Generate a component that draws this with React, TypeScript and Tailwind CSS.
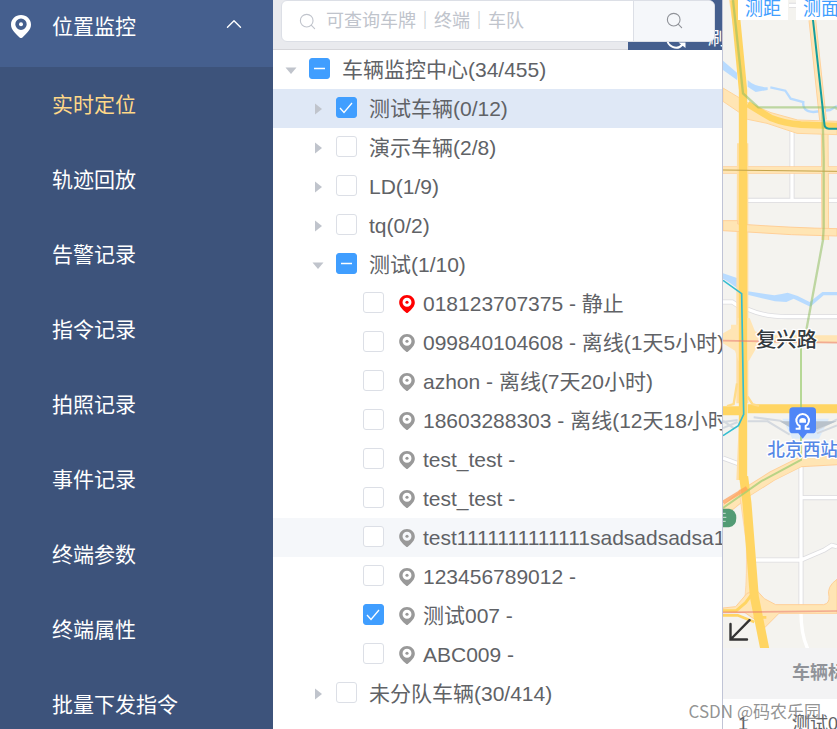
import React, { useEffect, useRef, useState } from 'react';
import { Search, ChevronUp } from 'lucide-react';

interface TreeNode {
  id: string;
  label: string;
  level: 0 | 1 | 2;
  expanded?: boolean;
  checked?: boolean;
  indeterminate?: boolean;
  pin?: string;
  rowClass?: string;
}

const menuItems = [
  '实时定位',
  '轨迹回放',
  '告警记录',
  '指令记录',
  '拍照记录',
  '事件记录',
  '终端参数',
  '终端属性',
  '批量下发指令',
];

const GRAY_PIN = 'text-[#999999]';
const RED_PIN = 'text-[#ff0000]';

const nodes: TreeNode[] = [
  { id: 'root', label: '车辆监控中心(34/455)', level: 0, expanded: true, indeterminate: true },
  { id: 'g1', label: '测试车辆(0/12)', level: 1, expanded: false, checked: true, rowClass: 'bg-[#dfe8f6]' },
  { id: 'g2', label: '演示车辆(2/8)', level: 1, expanded: false },
  { id: 'g3', label: 'LD(1/9)', level: 1, expanded: false },
  { id: 'g4', label: 'tq(0/2)', level: 1, expanded: false },
  { id: 'g5', label: '测试(1/10)', level: 1, expanded: true, indeterminate: true },
  { id: 'v1', label: '018123707375 - 静止', level: 2, pin: RED_PIN },
  { id: 'v2', label: '099840104608 - 离线(1天5小时)', level: 2, pin: GRAY_PIN },
  { id: 'v3', label: 'azhon - 离线(7天20小时)', level: 2, pin: GRAY_PIN },
  { id: 'v4', label: '18603288303 - 离线(12天18小时)', level: 2, pin: GRAY_PIN },
  { id: 'v5', label: 'test_test -', level: 2, pin: GRAY_PIN },
  { id: 'v6', label: 'test_test -', level: 2, pin: GRAY_PIN },
  { id: 'v7', label: 'test1111111111111sadsadsadsa1', level: 2, pin: GRAY_PIN, rowClass: 'bg-[#f5f7fa]' },
  { id: 'v8', label: '123456789012 -', level: 2, pin: GRAY_PIN },
  { id: 'v9', label: '测试007 -', level: 2, pin: GRAY_PIN, checked: true },
  { id: 'v10', label: 'ABC009 -', level: 2, pin: GRAY_PIN },
  { id: 'g6', label: '未分队车辆(30/414)', level: 1, expanded: false },
];

const indent = ['pl-3', 'pl-[39px]', 'pl-[66px]'];

const PinIcon: React.FC<{ className?: string }> = ({ className }) => (
  <svg viewBox="0 0 20 23" className={className} fill="currentColor" aria-hidden="true">
    <path
      fillRule="evenodd"
      d="M10 0C4.400 0 0 4.200 0 9.500c0 5.200 4.300 8.800 8.300 12.700a2.400 2.400 0 0 0 3.400 0C15.700 18.300 20 14.700 20 9.500 20 4.200 15.600 0 10 0Zm0 3.600a5.700 5.700 0 1 1 0 11.400 5.700 5.700 0 0 1 0-11.400Z"
    />
    <circle cx="10" cy="9.300" r="2" />
  </svg>
);

const Checkbox: React.FC<{ node: TreeNode }> = ({ node }) => {
  const ref = useRef<HTMLInputElement>(null);
  const [checked, setChecked] = useState(!!node.checked);
  const [partial, setPartial] = useState(!!node.indeterminate);

  useEffect(() => {
    if (ref.current) ref.current.indeterminate = partial;
  }, [partial]);

  return (
    <span className="relative mb-0.5 block size-[21px] shrink-0">
      <input
        ref={ref}
        id={node.id}
        type="checkbox"
        checked={checked}
        onChange={(e) => {
          setChecked(e.target.checked);
          setPartial(false);
        }}
        className="block size-[21px] appearance-none rounded-[3px] border border-[#dcdfe6] bg-white checked:border-[#409eff] checked:bg-[#409eff] indeterminate:border-[#409eff] indeterminate:bg-[#409eff]"
      />
      {(checked || partial) && (
        <svg viewBox="0 0 21 21" className="pointer-events-none absolute inset-0 size-full" fill="none" stroke="#fff" aria-hidden="true">
          {partial ? <path d="M5 10.500h11" strokeWidth="1.500" /> : <path d="M4 11l4 4.500 8-9.500" strokeWidth="1.300" />}
        </svg>
      )}
    </span>
  );
};

const TreeRow: React.FC<{ node: TreeNode }> = ({ node }) => (
  <li className={`flex h-[39px] items-center whitespace-nowrap ${indent[node.level]} ${node.rowClass ?? ''}`}>
    <span className="mr-3 flex w-3 shrink-0 justify-center">
      {node.expanded !== undefined && (
        <button type="button" aria-label={node.expanded ? '收起' : '展开'} className="block text-[#c0c4cc]">
          <svg viewBox="0 0 12 12" className="size-3" fill="currentColor" aria-hidden="true">
            {node.expanded ? <path d="M.5 3.500h11L6 10Z" /> : <path d="M3 .5v11L10 6Z" />}
          </svg>
        </button>
      )}
    </span>
    <Checkbox node={node} />
    <label htmlFor={node.id} className="flex items-center pt-px">
      {node.pin ? <PinIcon className={`mr-2 ml-[15px] h-[18px] w-4 shrink-0 ${node.pin}`} /> : <span className="w-3" />}
      <span>{node.label}</span>
    </label>
  </li>
);

const Sidebar: React.FC = () => (
  <nav className="w-[273px] shrink-0 overflow-hidden bg-[#3d537b] text-[21px] text-white">
    <button type="button" className="flex h-[67px] w-full items-center bg-[#455f8e] pr-[26px] pb-3.5 pl-[11px] text-left">
      <PinIcon className="h-[23px] w-5 shrink-0" />
      <span className="ml-[21px] flex-1">位置监控</span>
      <ChevronUp className="mb-1.5 size-[26px]" strokeWidth={1.3} />
    </button>
    <ul>
      {menuItems.map((item, i) => (
        <li key={item}>
          <a href="#" className={`flex h-[75px] items-center pl-[52px] ${i === 0 ? 'text-[#ffd888]' : ''}`}>
            {item}
          </a>
        </li>
      ))}
    </ul>
  </nav>
);

const VehiclePanel: React.FC = () => (
  <section className="relative flex w-[450px] shrink-0 flex-col overflow-hidden border-r border-[#c0c4d6] bg-white">
    <div className="relative h-[50px] shrink-0 border-b border-[#d6d6da] bg-[#e9eaee] pr-[7px] pl-2">
      {/* refresh button sits underneath the search box */}
      <button type="button" className="absolute top-0 right-0 h-[50px] w-[94px] overflow-hidden bg-[#455f8e] text-[18px] text-white">
        <svg viewBox="0 0 20 20" className="absolute top-[29px] left-[38px] size-5" fill="none" stroke="currentColor" strokeWidth="2" aria-hidden="true">
          <path d="M1.500 9a8.500 8.500 0 0 0 15 6.500M18.500 10a8.500 8.500 0 0 0-15-6" />
          <path d="M12.500 13.500h7v5.500Z" fill="currentColor" stroke="none" />
        </svg>
        <span className="absolute top-[26px] left-20 whitespace-nowrap">刷新</span>
      </button>
      <form className="relative flex h-[42px] overflow-hidden rounded-md border border-[#dcdfe6] bg-white" onSubmit={(e) => e.preventDefault()}>
        <label htmlFor="keyword" className="flex items-center pl-4 text-[#c0c4cc]">
          <Search className="size-[19px]" strokeWidth={1.4} aria-label="搜索" />
        </label>
        <input
          id="keyword"
          type="text"
          placeholder="可查询车牌｜终端｜车队"
          className="min-w-0 flex-1 bg-transparent pl-[9px] text-[18px] text-[#606266] outline-none placeholder:text-[#c0c4cc]"
        />
        <button type="submit" aria-label="查询" className="flex w-[81px] items-center justify-center border-l border-[#dcdfe6] bg-[#f5f7fa] pb-0.5 text-[#909399]">
          <Search className="size-[19px]" strokeWidth={1.4} />
        </button>
      </form>
    </div>
    <ul className="text-[21px] text-[#606266]">
      {nodes.map((node) => (
        <TreeRow key={node.id} node={node} />
      ))}
    </ul>
  </section>
);

const MapDrawing: React.FC = () => (
  <svg viewBox="18 0 342 1944" preserveAspectRatio="xMinYMin slice" className="absolute inset-0 size-full" fill="none" aria-label="地图">
    <rect x="18" width="2000" height="1944" fill="#f4f3ef" />
    {/* water */}
    <g fill="#b8dbff">
      <path d="M18 182l42 36v22l-42-30ZM92 240q20 20 60 22v8l-36 6-24-16Z" />
      <path d="M18 820l42 14v30q-20-16-42-28Z" />
      <path d="M92 874l80 12q24-4 40-8l30 10 36 18 38-30h44v10h-40l-40 34-50-24-22 10-34-2-82-20Z" />
    </g>
    <path d="M160 262l45 10 16 24 38 10q-4 28 30 30l50-6 21-12" stroke="#b8dbff" strokeWidth="7" />
    {/* minor roads */}
    <g stroke="#dcdcdf" strokeWidth="15">
      <path d="M225 385v215M92 601h268M216 16h24" />
      <path d="M18 906h28l18 12M92 928q50 22 120 22h148M18 1374l48 18M252 1390v430M252 1493h108M116 1680h136l70-30 22-14 16 4" />
    </g>
    <g stroke="#fff" strokeWidth="10">
      <path d="M225 385v215M92 601h268M216 16h24" />
      <path d="M18 906h28l18 12M92 928q50 22 120 22h148M18 1374l48 18M252 1390v430M252 1493h108M116 1680h136l70-30 22-14 16 4" />
      <path d="M252 1820q-2 80 20 126" />
    </g>
    {/* railway yard */}
    <path d="M196 1256h140l-30 60h-80Z" fill="#dcebfa" />
    <g stroke="#d4d9df" strokeWidth="6">
      <path d="M92 1264h60l66 40M110 1252l80 10 30 14M18 1266l44-6M18 1284l44-18M18 1262l34 24" />
      <path d="M296 1292l64-34M300 1300l60-24" />
    </g>
    <path d="M188 1264h172l-60 24h-72Z" fill="#b9c2cb" />
    {/* secondary roads */}
    <g stroke="#ffcf98" strokeWidth="23">
      <path d="M286 60l32 300M323 390l2 330M18 510h342" />
      <path d="M18 1534l72-58 76-48 84-42 110-6" strokeWidth="31" />
    </g>
    <g stroke="#ffe5b4" strokeWidth="18">
      <path d="M286 60l32 300M323 390l2 330M18 510h342" />
      <path d="M18 1534l72-58 76-48 84-42 110-6" strokeWidth="26" />
    </g>
    <path d="M36 0h24l22 220h-12ZM60 430h34v780H58v-310ZM66 1250h12v190H58Z" fill="#ffdfa5" />
    <path d="M66 1470h12l26 300-20 20q6-60 4-160Z" fill="#ffe5b4" stroke="#ffcf98" strokeWidth="2" />
    <path d="M18 662h44v10q170 12 298 14v22q-140-2-268-12l-74-4Z" fill="#ffe5b4" stroke="#ffcf98" strokeWidth="3" />
    <path d="M18 1000l24-14v-12h20v-20h36l16 40 30 12h216v24H150l-32 14-22 38H64l-10-30-36-22Z" fill="#ffe5b4" />
    <path d="M18 264l50 30 24 14 70 30 80 22 118 4v40l-120-4-90-30-58-12h-24v-20l-50-34Z" fill="#ffe5b4" stroke="#ffd49a" strokeWidth="3" />
    <path d="M18 1824l38-4 34-40 30-8 22 24 34 18h144q18-4 16-24-8-30 24-52v102H186l-46 46-30-30-26-18-66-2Z" fill="#ffe5b4" stroke="#ffcf98" strokeWidth="3" />
    {/* ring road */}
    <g stroke="#ffd563" strokeLinejoin="round">
      <path d="M52 0l26 270v1170" strokeWidth="25" />
      <path d="M80 1430l10 80 22 280 32 160" strokeWidth="27" />
      <path d="M92 312l70 42q40 16 90 20l108 4" strokeWidth="20" />
      <path d="M18 1232h60M92 1226h268" strokeWidth="27" />
      <path d="M18 1832h40l28-24 16-22" strokeWidth="9" />
      <path d="M18 1846h44l50 20M110 1852h38" strokeWidth="8" />
    </g>
    <path d="M60 1150l-10 62-20 6M92 1190l14 22 20 6" stroke="#ffdc8a" strokeWidth="7" />
    {/* metro lines */}
    <path d="M48 0l30 280 46 42h232l4 6M316 322l4 150v210l-2 38-50 270" stroke="#8fbd60" strokeOpacity=".55" strokeWidth="7" />
    <path d="M252 1040v340l-120 64-114 80" stroke="#9bcc70" strokeOpacity=".7" strokeWidth="6" />
    <path d="M288 60l34 310q0 16 14 16h24" stroke="#159e9e" strokeWidth="6" />
    <path d="M18 510l342 4" stroke="#c3a34a" strokeWidth="3" />
    <path d="M18 841l56 40 6 362-16 34-46 30" stroke="#35bdd0" strokeWidth="5" />
    <path d="M18 1022l342 6M18 1837l342-4" stroke="#e5716e" strokeOpacity=".5" strokeWidth="5" />
    <path d="M18 1508l72-44" stroke="#ff9c55" strokeOpacity=".7" strokeWidth="12" />
    <path d="M18 1526h18q22 4 22 28t-22 28H18Z" fill="#529b74" />
    <path d="M18 1540h8M18 1552h10M18 1564h8" stroke="#cfe5d8" strokeWidth="3" />
    {/* station */}
    <path d="M228 1222h58q11 0 11 11v56q0 11-11 11h-16l-13 16-13-16h-16q-11 0-11-11v-56q0-11 11-11Z" fill="#4f86f7" />
    <path d="M236 1286h12v-8a19 19 0 1 1 18 0v8h12" stroke="#fff" strokeWidth="6" />
    <path d="M247 1268v-6q0-8 10-8t10 8v6Z" fill="#fff" />
    <g fontFamily="'Noto Sans CJK SC', sans-serif" stroke="#fff" strokeWidth="8" paintOrder="stroke" strokeLinejoin="round">
      <text x="117" y="1040" fontSize="61" fontWeight="500" fill="#333a40">复兴路</text>
      <text x="151" y="1368" fontSize="53" fontWeight="500" fill="#5688e6">北京西站</text>
    </g>
  </svg>
);

const MapPanel: React.FC = () => (
  <main className="flex min-w-0 flex-1 flex-col overflow-hidden bg-white text-[18px]">
    <div className="relative min-h-0 flex-1 overflow-hidden">
      <MapDrawing />
      <div className="absolute top-0 left-[15px] flex gap-2 whitespace-nowrap text-[#409eff]">
        <button type="button" className="h-5 bg-white px-[7px] pb-0.5 leading-[18px]">测距</button>
        <button type="button" className="h-5 bg-white px-[7px] pb-0.5 leading-[18px]">测面</button>
      </div>
      <button type="button" aria-label="收起表格" className="absolute bottom-[7px] left-1.5">
        <svg viewBox="0 0 22 22" className="size-[22px]" fill="none" stroke="#333" strokeWidth="2.400" strokeLinecap="round" aria-hidden="true">
          <path d="M20.500 1.200L1.500 20.500M1.500 5v15.500h16.500" />
        </svg>
      </button>
    </div>
    <div className="h-[81px] shrink-0 overflow-hidden">
      <table className="w-[600px] table-fixed text-left text-[#606266]">
        <thead>
          <tr className="h-[51px] bg-[#f3f3f4] text-[#909399]">
            <th className="w-[54px]" />
            <th className="px-[15px] font-bold">车辆标识</th>
          </tr>
        </thead>
        <tbody>
          <tr className="h-[51px]">
            <td className="px-[15px]">1</td>
            <td className="px-[15px]">测试007</td>
          </tr>
        </tbody>
      </table>
    </div>
  </main>
);

const App: React.FC = () => (
  <div className="relative flex h-screen overflow-hidden font-['Liberation_Sans','Noto_Sans_CJK_SC',sans-serif]">
    <Sidebar />
    <VehiclePanel />
    <MapPanel />
    <span className="pointer-events-none absolute right-4 bottom-1.5 font-['Noto_Sans_CJK_SC',sans-serif] text-[17px] leading-6 text-[#777]/80">
      CSDN @码农乐园
    </span>
  </div>
);

export default App;
